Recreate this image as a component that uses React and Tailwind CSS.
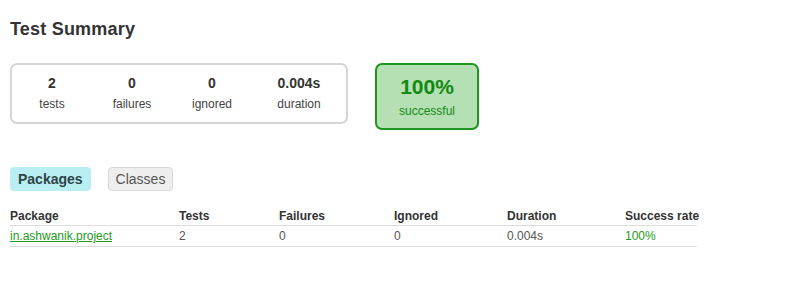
import React from "react";

export default function App() {
  const font = { fontFamily: '"Liberation Sans", Arial, sans-serif' };
  const cells = [
    ["2", "tests", "w-[80px]"],
    ["0", "failures", "w-[80px]"],
    ["0", "ignored", "w-[80px]"],
    ["0.004s", "duration", "w-[94px]"],
  ];
  return (
    <div className="w-[800px] h-[282px] bg-white text-[#333] px-[10px] pt-[19px]" style={font}>
      <h1 className="text-[18px] leading-[21px] font-bold text-[#333] tracking-[0.2px]">Test Summary</h1>
      <div className="flex items-start mt-[23px]">
        <div className="flex border-2 border-[#d5d5d5] rounded-[7px]">
          {cells.map(([n, l, w]) => (
            <div key={l} className={`${w} pt-[10px] pb-[11px] text-center`}>
              <div className="text-[14px] leading-[17px] font-bold mb-[5px] text-[#333]">{n}</div>
              <div className="text-[12px] leading-[14px] text-[#444]">{l}</div>
            </div>
          ))}
        </div>
        <div className="ml-[27px] w-[104px] border-2 border-[#1e961e] bg-[#b4e0b4] rounded-[7px] pt-[10px] pb-[10px] text-center text-[#118a11]">
          <div className="text-[21px] leading-[24px] font-bold mb-[5px]">100%</div>
          <div className="text-[12px] leading-[14px]">successful</div>
        </div>
      </div>
      <div className="flex mt-[37px] gap-[17px]">
        <div className="h-[24px] px-[8px] flex items-center rounded-[4px] bg-[#b9eef3] text-[14px] font-bold text-[#2f4447]">Packages</div>
        <div className="h-[24px] px-[7px] flex items-center rounded-[4px] bg-[#eeeeee] border border-[#d8d8d8] text-[14px] text-[#555]">Classes</div>
      </div>
      <table className="mt-[18px] border-collapse text-[12px] table-fixed w-[687px] whitespace-nowrap">
        <thead>
          <tr className="border-b border-[#dcdcdc]">
            <th className="w-[169px] text-left font-bold leading-[14px] pb-[2px] text-[#333]">Package</th>
            <th className="w-[100px] text-left font-bold leading-[14px] pb-[2px] text-[#333]">Tests</th>
            <th className="w-[115px] text-left font-bold leading-[14px] pb-[2px] text-[#333]">Failures</th>
            <th className="w-[113px] text-left font-bold leading-[14px] pb-[2px] text-[#333]">Ignored</th>
            <th className="w-[118px] text-left font-bold leading-[14px] pb-[2px] text-[#333]">Duration</th>
            <th className="w-[72px] text-left font-bold leading-[14px] pb-[2px] text-[#333]">Success rate</th>
          </tr>
        </thead>
        <tbody>
          <tr className="border-b border-[#dcdcdc]">
            <td className="leading-[14px] py-[3px]"><a className="underline text-[#229a22]">in.ashwanik.project</a></td>
            <td className="leading-[14px] py-[3px] text-[#555]">2</td>
            <td className="leading-[14px] py-[3px] text-[#555]">0</td>
            <td className="leading-[14px] py-[3px] text-[#555]">0</td>
            <td className="leading-[14px] py-[3px] text-[#555]">0.004s</td>
            <td className="leading-[14px] py-[3px] text-[#229a22]">100%</td>
          </tr>
        </tbody>
      </table>
    </div>
  );
}
